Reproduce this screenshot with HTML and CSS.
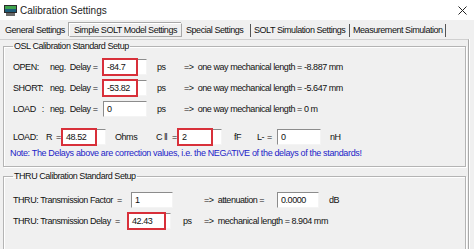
FILE: index.html
```html
<!DOCTYPE html>
<html lang="en">

<head>
    <meta charset="UTF-8">
    <meta name="viewport" content="width=device-width, initial-scale=1.0">
    <title>Calibration Settings</title>
    <link rel="stylesheet" href="styles.css">
</head>

<body>
    <div class="window">
        <div class="titlebar">
            <svg class="app-icon" viewBox="0 0 13 11" width="13" height="11">
                <rect x="0" y="0" width="13" height="8" fill="#2a2a2a"/>
                <rect x="1" y="1" width="11" height="3" fill="#3fa34d"/>
                <rect x="1" y="4" width="11" height="3" fill="#1d5c7a"/>
                <rect x="2" y="8" width="9" height="3" fill="#6a6a6a"/>
            </svg>
            <span class="title">Calibration Settings</span>
            <svg class="close" viewBox="0 0 9 9" width="9" height="9">
                <path d="M0.5 0.5 L8.5 8.5 M8.5 0.5 L0.5 8.5" stroke="#222" stroke-width="1"/>
            </svg>
        </div>

        <div class="tabs">
            <span class="tab tab-general">General Settings</span>
            <span class="tab active">Simple SOLT Model Settings</span>
            <span class="tab sep tab-special">Special Settings</span>
            <span class="tab sep tab-sim">SOLT Simulation Settings</span>
            <span class="tab sep tab-meas">Measurement Simulation</span>
        </div>

        <div class="page">
            <fieldset class="group osl">
                <legend>OSL Calibration Standard Setup</legend>

                <div class="row">
                    <span class="c-name">OPEN:</span>
                    <span class="c-neg">neg.&nbsp; Delay =</span>
                    <span class="field"><span class="mark"></span>-84.7</span>
                    <span class="c-unit">ps</span>
                    <span>=&gt;&nbsp; one way mechanical length = -8.887 mm</span>
                </div>
                <div class="row">
                    <span class="c-name">SHORT:</span>
                    <span class="c-neg">neg.&nbsp; Delay =</span>
                    <span class="field"><span class="mark"></span>-53.82</span>
                    <span class="c-unit">ps</span>
                    <span>=&gt;&nbsp; one way mechanical length = -5.647 mm</span>
                </div>
                <div class="row">
                    <span class="c-name">LOAD&nbsp;&nbsp; :</span>
                    <span class="c-neg">neg.&nbsp; Delay =</span>
                    <span class="field">0</span>
                    <span class="c-unit">ps</span>
                    <span>=&gt;&nbsp; one way mechanical length = 0 m</span>
                </div>

                <div class="row row-load">
                    <span class="c-load">LOAD:</span>
                    <span class="c-r">R</span>
                    <span class="c-eq">=</span>
                    <span class="field"><span class="mark"></span>48.52</span>
                    <span class="c-ohms">Ohms</span>
                    <span class="c-c">C &#8214;</span>
                    <span class="c-eq">=</span>
                    <span class="field"><span class="mark"></span>2</span>
                    <span class="c-ff">fF</span>
                    <span class="c-l">L-</span>
                    <span class="c-eq2">=</span>
                    <span class="field">0</span>
                    <span class="c-nh">nH</span>
                </div>
                <div class="note">Note: The Delays above are correction values, i.e. the NEGATIVE of the delays of the standards!</div>
            </fieldset>

            <fieldset class="group thru">
                <legend>THRU Calibration Standard Setup</legend>

                <div class="row">
                    <span class="c-thru1">THRU: Transmission Factor</span>
                    <span class="c-teq1">=</span>
                    <span class="field field-thru">1</span>
                    <span class="c-gap"></span>
                    <span class="c-att">=&gt;&nbsp; attenuation =</span>
                    <span class="field field-thru">0.0000</span>
                    <span class="c-db">dB</span>
                </div>
                <div class="row">
                    <span class="c-thru2">THRU: Transmission Delay</span>
                    <span class="c-teq2">=</span>
                    <span class="field field-delay"><span class="mark"></span>42.43</span>
                    <span class="c-ps2">ps</span>
                    <span>=&gt;&nbsp; mechanical length = 8.904 mm</span>
                </div>
            </fieldset>
        </div>
    </div>
</body>

</html>
```

FILE: styles.css
```css
body {
    margin: 0;
    font-family: "Liberation Sans", Arial, sans-serif;
    font-size: 9px;
    letter-spacing: -0.45px;
    color: #111;
    background-color: #f0f0f0;
}

.window {
    width: 474px;
    height: 249px;
    overflow: hidden;
    background-color: #f0f0f0;
}

/* title bar */
.titlebar {
    height: 20px;
    display: flex;
    align-items: center;
    padding-left: 4px;
    background-color: #fff;
}

.app-icon {
    margin-right: 3px;
}

.title {
    font-size: 10px;
    letter-spacing: 0;
    color: #222;
}

.close {
    margin-left: auto;
    margin-right: 7px;
}

/* tab strip */
.tabs {
    height: 16px;
    display: flex;
    align-items: center;
    padding: 2px 0 0 5px;
    margin-bottom: 1px;
}

.tab {
    line-height: 13px;
    white-space: nowrap;
}

.tab-general {
    width: 64px;
}

.tab.active {
    box-sizing: border-box;
    width: 113px;
    height: 14px;
    padding-left: 4px;
    border: 1px solid #a8a8a8;
    border-top-color: #fff;
    border-left-color: #fff;
    box-shadow: -1px -1px 0 #a8a8a8;
    margin-right: 4px;
}

.tab.sep {
    border-right: 1px solid #555;
    padding-right: 3px;
    margin-right: 3px;
}

.tab-special {
    width: 61px;
}

.tab-sim {
    width: 92px;
}

.tab-meas {
    width: 89px;
}

/* page */
.page {
    width: 468px;
    height: 210px;
    border-top: 1px solid #d0d0d0;
    border-right: 1px solid #a8a8a8;
    box-shadow: 1px 0 0 #fff;
}

.group {
    margin: 0 2px 0 3px;
    padding: 0 0 0 9px;
    border: 1px solid #b4b4b4;
    box-shadow: inset 1px 1px 0 #fff, 1px 1px 0 #fff;
}

.group legend {
    padding: 0 1px;
    margin-left: 0;
    line-height: 12px;
    color: #111;
}

.osl {
    padding-top: 4px;
    padding-bottom: 6px;
}

.thru {
    margin-top: 3px;
    padding-top: 7px;
    height: 80px;
}

.row {
    display: flex;
    align-items: center;
    height: 21px;
    white-space: nowrap;
}

.row-load {
    margin-top: 8px;
    height: 20px;
}

.field {
    position: relative;
    box-sizing: border-box;
    width: 44px;
    height: 16px;
    line-height: 14px;
    padding-left: 3px;
    background-color: #fff;
    border-top: 1px solid #8c8c8c;
    border-left: 1px solid #8c8c8c;
    border-right: 1px solid #f4f4f4;
    border-bottom: 1px solid #f4f4f4;
}

/* red annotation boxes drawn over the inputs */
.mark {
    position: absolute;
    left: -2px;
    top: -2px;
    box-sizing: border-box;
    width: 36px;
    height: 18px;
    border: 2px solid #d8303a;
}

.c-name {
    width: 37px;
}

.c-neg {
    width: 53px;
}

.c-unit {
    box-sizing: border-box;
    width: 37px;
    padding-left: 10px;
}

.c-load {
    width: 33px;
}

.c-r {
    width: 10px;
}

.c-eq {
    width: 6px;
}

.c-ohms {
    box-sizing: border-box;
    width: 50px;
    padding-left: 9px;
}

.c-c {
    width: 16px;
}

.c-ff {
    box-sizing: border-box;
    width: 35px;
    padding-left: 12px;
}

.c-l {
    width: 10px;
}

.c-eq2 {
    width: 10px;
}

.c-nh {
    padding-left: 9px;
}

.note {
    margin-left: -3px;
    line-height: 13px;
    letter-spacing: -0.35px;
    color: #2424c8;
    white-space: nowrap;
}

.c-thru1 {
    width: 104px;
}

.c-teq1 {
    width: 14px;
}

.field-thru {
    width: 42px;
}

.c-gap {
    width: 31px;
}

.c-att {
    width: 73px;
}

.c-db {
    padding-left: 10px;
}

.c-thru2 {
    width: 102px;
}

.c-teq2 {
    width: 13px;
}

.field-delay {
    width: 43px;
}

.field-delay .mark {
    width: 39px;
}

.c-ps2 {
    box-sizing: border-box;
    width: 33px;
    padding-left: 12px;
}
```
